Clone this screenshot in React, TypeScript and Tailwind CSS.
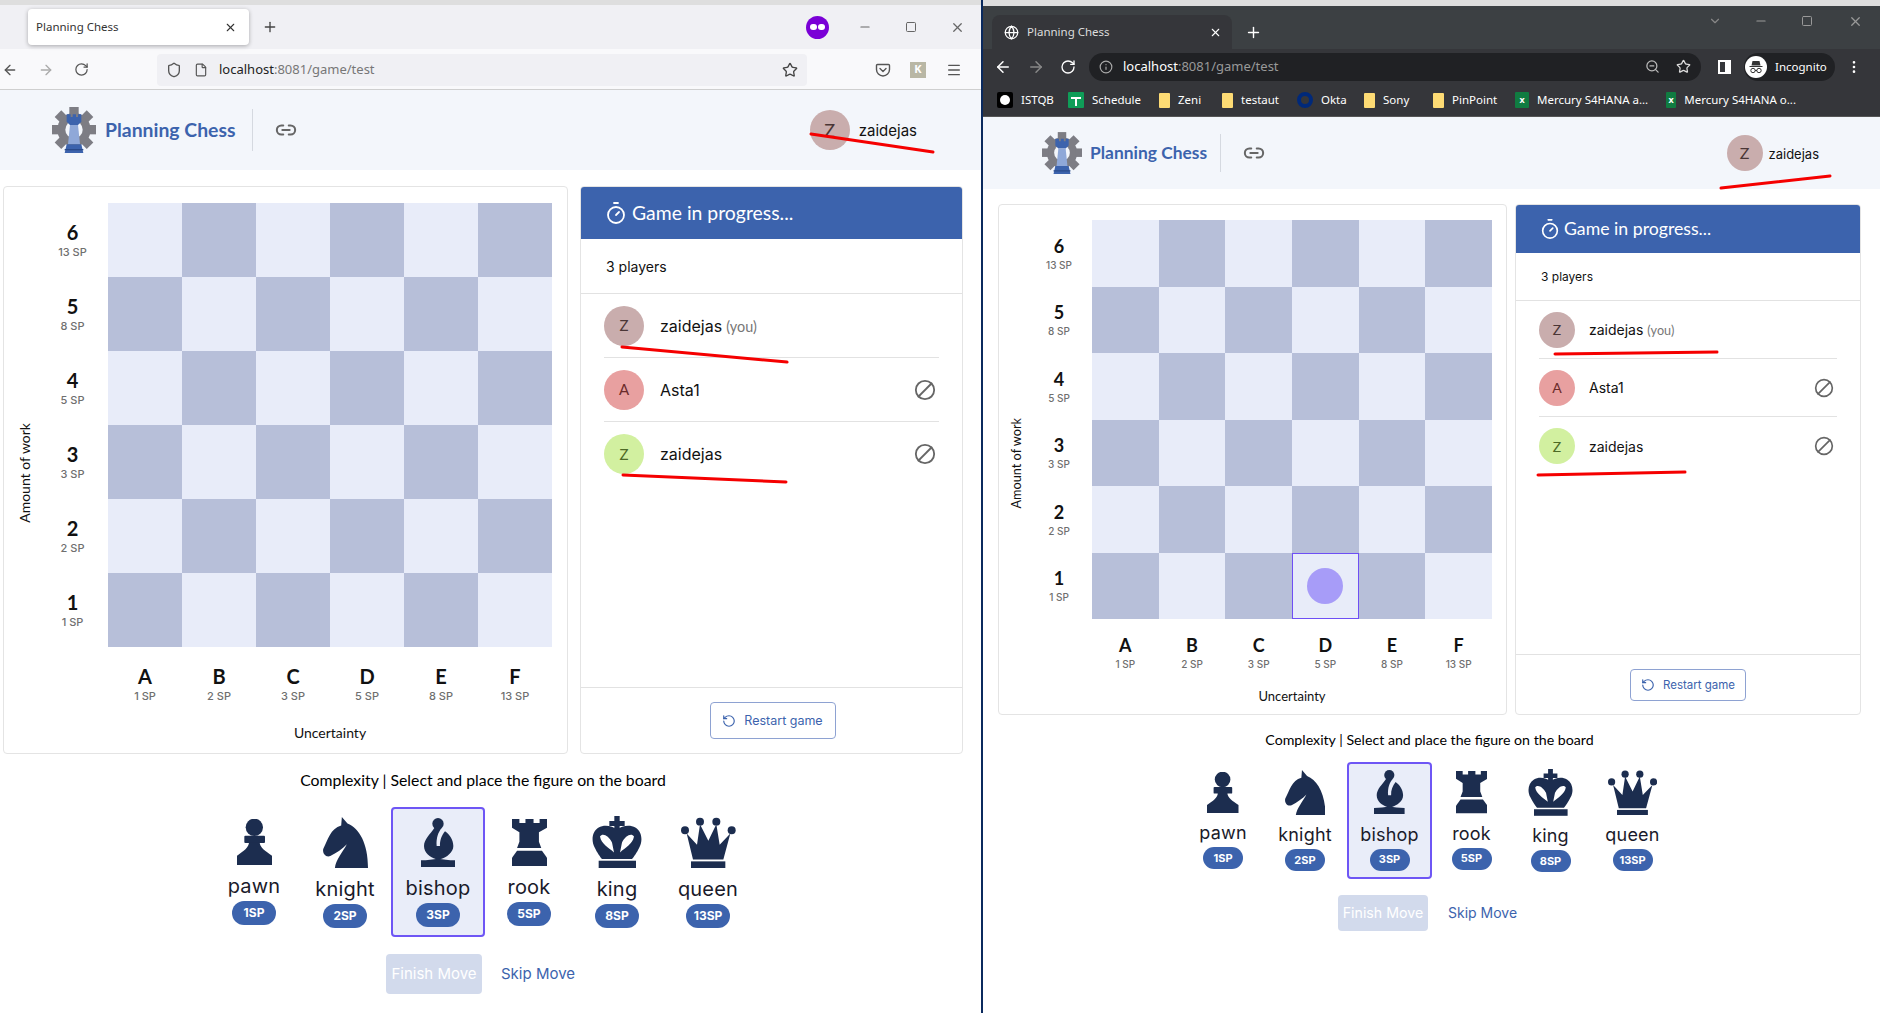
import { ArrowLeft, ArrowRight, Ban, File, Globe, Info, Link2, Menu, Minus, Plus, RotateCcw, RotateCw, Shield, Square, Star, Timer, X, ZoomOut, ChevronDown, EllipsisVertical } from 'lucide-react'

const navy = '#1c2d4f'

function Pawn({ s }: { s: number }) {
  return (
    <svg width={35 * s} height={46 * s} viewBox="0 0 105 138" preserveAspectRatio="none" fill={navy}>
      <circle cx="52" cy="25" r="26" />
      <rect x="22" y="50" width="62" height="22" rx="3" />
      <path d="M36 70C36 85 20 97 0 110V138H105V110C85 97 68 85 68 70Z" />
    </svg>
  )
}

function Knight({ s }: { s: number }) {
  return (
    <svg width={45 * s} height={51 * s} viewBox="0 0 136 154" preserveAspectRatio="none" fill={navy}>
      <path d="M57 0L74 20C110 35 136 80 136 154H36C38 130 60 105 72 82C60 96 40 108 22 118C8 124-3 108 1 96C15 70 22 35 55 26Z" />
    </svg>
  )
}

function Bishop({ s }: { s: number }) {
  return (
    <svg width={34 * s} height={49 * s} viewBox="0 0 102 147" preserveAspectRatio="none" fill={navy}>
      <circle cx="51" cy="17" r="17" />
      <path d="M40 30H62C52 42 45 60 47 84H57C56 68 62 52 72 40C86 50 97 66 97 84C97 104 76 118 60 123H44C28 118 9 105 9 84C9 64 28 48 40 30Z" />
      <path d="M0 127C20 127 35 124 51 122C67 124 82 127 102 127V147H0Z" />
    </svg>
  )
}

function Rook({ s }: { s: number }) {
  return (
    <svg width={35 * s} height={47 * s} viewBox="0 0 104 141" preserveAspectRatio="none" fill={navy}>
      <path d="M0 0H22V12H40V0H64V12H82V0H104V26L80 40V68L87 87H15L22 68V40L0 26Z" />
      <path d="M15 95H89L104 116V141H0V116Z" />
    </svg>
  )
}

function King({ s }: { s: number }) {
  return (
    <svg width={50 * s} height={52 * s} viewBox="0 0 150 157" preserveAspectRatio="none" fill={navy}>
      <path d="M67 0H83V15H98V30H83V44H67V30H52V15H67Z" />
      <path
        fillRule="evenodd"
        d="M75 42C60 28 35 26 20 35C0 47-3 75 8 95C15 110 25 124 30 130H120C125 124 135 110 142 95C153 75 150 47 130 35C115 26 90 28 75 42ZM24 62C32 50 50 60 60 80L66 110C50 95 28 85 24 62ZM126 62C118 50 100 60 90 80L84 110C100 95 122 85 126 62Z"
      />
      <rect x="20" y="135" width="112" height="22" />
    </svg>
  )
}

function Queen({ s }: { s: number }) {
  return (
    <svg width={55 * s} height={51 * s} viewBox="0 0 165 154" preserveAspectRatio="none" fill={navy}>
      <circle cx="12" cy="40" r="12" />
      <circle cx="57" cy="14" r="12" />
      <circle cx="106" cy="14" r="12" />
      <circle cx="152" cy="40" r="12" />
      <path d="M36 128L17 50L48 84L57 22L82 72L106 22L116 84L148 50L127 128Z" />
      <rect x="30" y="134" width="103" height="20" />
    </svg>
  )
}

function Logo({ small }: { small?: boolean }) {
  return (
    <svg className={small ? 'h-[42px] w-[40px]' : 'h-[46px] w-[44px]'} viewBox="0 0 132 138">
      <g fill="#7d7d84">
        <circle cx="66" cy="68" r="50" />
        {[0, 45, 90, 135, 180, 225, 270, 315].map((a) => (
          <rect key={a} x="52" y="0" width="28" height="24" transform={`rotate(${a} 66 68)`} />
        ))}
      </g>
      <circle cx="66" cy="68" r="26" fill="#f3f6fb" />
      <path d="M44 22H56V30H62V22H72V30H78V22H88V44L78 54H54L44 44Z" fill="#3c63ad" />
      <path d="M54 54H78L84 112H48Z" fill="#8fa8d8" />
      <path d="M44 112H88L94 138H38Z" fill="#3c63ad" />
      <rect x="38" y="126" width="56" height="4" fill="#2a4a8a" />
    </svg>
  )
}

const big = {
  header: 'h-[80px] pl-[52px] pr-[64px]',
  logoText: 'ml-[9px] text-[19.4px]',
  sep: 'ml-[17px] h-[42px] mr-[22px]',
  headAvatar: 'h-[40px] w-[40px] text-[18px]',
  headName: 'ml-[9px] pt-[2px] text-[15px]',
  main: 'w-[963px] pt-[16px] pl-[3px]',
  panels: 'gap-[12px]',
  boardPanel: 'h-[568px] w-[565px] pt-[16px]',
  axisY: 'w-[41px] pt-[96px] text-[14px]',
  rowLabels: 'w-[55px] mr-[8px]',
  board: 'h-[444px] w-[444px]',
  num: 'text-[20px] leading-[24px]',
  sp: 'text-[11px] leading-[16px]',
  cols: 'ml-[104px] w-[444px] mt-[17px]',
  axisX: 'ml-[104px] w-[444px] mt-[18px] text-[14px]',
  status: 'h-[568px] w-[383px]',
  statusHead: 'h-[52px] pl-[23px] text-[19.4px] gap-[4px]',
  timer: 24,
  players: 'h-[55px] pl-[25px] text-[14px]',
  rows: 'px-[23px]',
  row: 'h-[64px]',
  avatar: 'h-[40px] w-[40px] text-[15px]',
  name: 'ml-[16px] text-[16px]',
  ban: 22,
  statusFoot: 'h-[66px]',
  restart: 'ml-[2px] h-[37px] w-[126px] text-[12.5px] gap-[8px]',
  complexity: 'mt-[14px] h-[20px] text-[15.8px]',
  pieces: 'mt-[19px] pl-[206px]',
  pieceBox: 'h-[130px]',
  widths: ['w-[90px]', 'w-[92px]', 'w-[94px]', 'w-[88px]', 'w-[88px]', 'w-[94px]'],
  label: 'mt-[9px] h-[24px] text-[20px] leading-[24px] tracking-[0.2px]',
  badge: 'mt-[3px] h-[24px] w-[44px] text-[12px]',
  actions: 'mt-[17px] pl-[383px] gap-[19px]',
  finish: 'h-[40px] w-[96px] text-[15px]',
  skip: 'pt-[1px] text-[15px]',
  scale: 1,
}

const small = {
  header: 'h-[72px] pl-[59px] pr-[61px]',
  logoText: 'ml-[8px] text-[17.4px]',
  sep: 'ml-[13px] h-[38px] mr-[22px]',
  headAvatar: 'h-[36px] w-[36px] text-[16px]',
  headName: 'ml-[6px] pt-[3px] text-[13px]',
  main: 'w-[878px] pt-[15px] pl-[15px]',
  panels: 'gap-[8px]',
  boardPanel: 'h-[511px] w-[509px] pt-[15px]',
  axisY: 'w-[36px] pt-[88px] text-[12.7px]',
  rowLabels: 'w-[48px] mr-[9px]',
  board: 'h-[399px] w-[400px]',
  num: 'text-[18px] leading-[23px]',
  sp: 'text-[10px] leading-[14px]',
  cols: 'ml-[93px] w-[400px] mt-[15px]',
  axisX: 'ml-[93px] w-[400px] mt-[16px] text-[13px]',
  status: 'h-[511px] w-[346px]',
  statusHead: 'h-[48px] pl-[23px] text-[17.7px] gap-[3px]',
  timer: 22,
  players: 'h-[48px] pl-[25px] text-[12px]',
  rows: 'px-[23px]',
  row: 'h-[58px]',
  avatar: 'h-[36px] w-[36px] text-[14px]',
  name: 'ml-[14px] text-[14px]',
  ban: 20,
  statusFoot: 'h-[60px]',
  restart: 'h-[32px] w-[116px] text-[11.5px] gap-[8px]',
  complexity: 'mt-[14px] h-[20px] text-[14.2px]',
  pieces: 'mt-[13px] pl-[185px]',
  pieceBox: 'h-[117px]',
  widths: ['w-[80px]', 'w-[84px]', 'w-[85px]', 'w-[79px]', 'w-[79px]', 'w-[85px]'],
  label: 'mt-[9px] h-[22px] text-[18px] leading-[22px] tracking-[0.2px]',
  badge: 'mt-[3px] h-[22px] w-[40px] text-[11px]',
  actions: 'mt-[16px] pl-[340px] gap-[20px]',
  finish: 'h-[36px] w-[90px] text-[14.2px]',
  skip: 'pb-[1px] text-[14px]',
  scale: 0.9,
}

type Size = typeof big

const lato = '[font-family:Lato,sans-serif]'
const rubik = '[font-family:Inter,sans-serif]'

function AppHeader({ v, isSmall }: { v: Size; isSmall?: boolean }) {
  return (
    <div className={`flex items-center bg-[#f3f6fb] ${v.header}`}>
      <Logo small={isSmall} />
      <span className={`font-bold text-[#3c63ad] ${lato} ${v.logoText}`}>Planning Chess</span>
      <div className={`w-px bg-[#d5d9e0] ${v.sep}`} />
      <Link2 size={22} className="text-[#666]" strokeWidth={2.2} />
      <div className={`ml-auto flex items-center justify-center rounded-full bg-[#c9adad] text-[#4a3636] ${v.headAvatar} ${lato}`}>Z</div>
      <span className={`text-[#111] ${rubik} ${v.headName}`}>zaidejas</span>
    </div>
  )
}

function Board({ v, placed }: { v: Size; placed?: boolean }) {
  const rows = [
    ['6', '13 SP'],
    ['5', '8 SP'],
    ['4', '5 SP'],
    ['3', '3 SP'],
    ['2', '2 SP'],
    ['1', '1 SP'],
  ]
  const cols = [
    ['A', '1 SP'],
    ['B', '2 SP'],
    ['C', '3 SP'],
    ['D', '5 SP'],
    ['E', '8 SP'],
    ['F', '13 SP'],
  ]
  return (
    <div className={`shrink-0 rounded border border-[#e4e4e4] bg-white ${v.boardPanel}`}>
      <div className="flex">
        <div className={`flex items-center justify-center ${v.axisY}`}>
          <span className={`rotate-180 whitespace-nowrap text-[#111] [writing-mode:vertical-rl] ${lato}`}>Amount of work</span>
        </div>
        <div className={`grid grid-rows-6 ${v.rowLabels}`}>
          {rows.map(([n, sp]) => (
            <div key={n} className="flex flex-col items-center justify-center">
              <span className={`font-bold text-[#111] ${lato} ${v.num}`}>{n}</span>
              <span className={`font-medium text-[#6f6f6f] ${rubik} ${v.sp}`}>{sp}</span>
            </div>
          ))}
        </div>
        <div className={`grid grid-cols-6 grid-rows-6 ${v.board}`}>
          {Array.from({ length: 36 }).map((_, i) => {
            const r = Math.floor(i / 6)
            const c = i % 6
            const on = placed && r === 5 && c === 3
            return (
              <div
                key={i}
                className={`flex items-center justify-center ${(r + c) % 2 === 0 ? 'bg-[#e8ecf9]' : 'bg-[#b7bfd9]'} ${on ? 'border border-[#6e4ff5]' : ''}`}
              >
                {on && <div className="h-[36px] w-[36px] rounded-full bg-[#a79cf8]" />}
              </div>
            )
          })}
        </div>
      </div>
      <div className={`grid grid-cols-6 ${v.cols}`}>
        {cols.map(([n, sp]) => (
          <div key={n} className="flex flex-col items-center">
            <span className={`font-bold text-[#111] ${lato} ${v.num}`}>{n}</span>
            <span className={`font-medium text-[#6f6f6f] ${rubik} ${v.sp}`}>{sp}</span>
          </div>
        ))}
      </div>
      <div className={`text-center text-[#111] ${lato} ${v.axisX}`}>Uncertainty</div>
    </div>
  )
}

function Status({ v }: { v: Size }) {
  const players = [
    { name: 'zaidejas', you: true, bg: 'bg-[#c9adad]', fg: 'text-[#4a3636]', letter: 'Z' },
    { name: 'Asta1', bg: 'bg-[#e8a0a0]', fg: 'text-[#6b2b2b]', letter: 'A' },
    { name: 'zaidejas', bg: 'bg-[#d2f0a0]', fg: 'text-[#4d6a26]', letter: 'Z' },
  ]
  return (
    <div className={`flex shrink-0 flex-col overflow-hidden rounded border border-[#e4e4e4] bg-white ${v.status}`}>
      <div className={`flex items-center bg-[#3c63ad] text-white ${lato} ${v.statusHead}`}>
        <Timer size={v.timer} strokeWidth={1.8} />
        Game in progress...
      </div>
      <div className={`flex items-center border-b border-[#e2e2e2] text-[#111] ${rubik} ${v.players}`}>3 players</div>
      <div className={v.rows}>
        {players.map((p, i) => (
          <div key={i} className={`flex items-center ${v.row} ${i < 2 ? 'border-b border-[#e2e2e2]' : ''}`}>
            <div className={`flex items-center justify-center rounded-full ${p.bg} ${p.fg} ${v.avatar} ${lato}`}>{p.letter}</div>
            <span className={`text-[#111] ${rubik} ${v.name}`}>
              {p.name}
              {p.you && <span className={`ml-[4px] text-[0.9em] text-[#777] ${lato}`}>(you)</span>}
            </span>
            {!p.you && <Ban size={v.ban} strokeWidth={2} className="ml-auto mr-[3px] -scale-x-100 text-[#666]" />}
          </div>
        ))}
      </div>
      <div className={`mt-auto flex items-center justify-center border-t border-[#e2e2e2] ${v.statusFoot}`}>
        <button className={`flex items-center justify-center rounded border border-[#8ea2d2] text-[#3c63ad] ${rubik} ${v.restart}`}>
          <RotateCcw size={14} />
          <span className="pt-[2px]">Restart game</span>
        </button>
      </div>
    </div>
  )
}

function Figures({ v }: { v: Size }) {
  const figures = [
    { name: 'pawn', sp: '1SP', Icon: Pawn },
    { name: 'knight', sp: '2SP', Icon: Knight },
    { name: 'bishop', sp: '3SP', Icon: Bishop, active: true },
    { name: 'rook', sp: '5SP', Icon: Rook },
    { name: 'king', sp: '8SP', Icon: King },
    { name: 'queen', sp: '13SP', Icon: Queen },
  ]
  return (
    <div className={`flex ${v.pieces}`}>
      {figures.map(({ name, sp, Icon, active }, i) => (
        <div
          key={name}
          className={`flex flex-col items-center justify-center rounded ${v.pieceBox} ${v.widths[i]} ${active ? 'border-2 border-[#6e56f5] bg-[#e9edf9]' : ''}`}
        >
          <Icon s={v.scale} />
          <span className={`text-[#1a1a2a] ${rubik} ${v.label}`}>{name}</span>
          <span className={`flex items-center justify-center rounded-full bg-[#3c63ad] font-bold text-white ${rubik} ${v.badge}`}>{sp}</span>
        </div>
      ))}
    </div>
  )
}

function Game({ v, placed }: { v: Size; placed?: boolean }) {
  return (
    <div className={v.main}>
      <div className={`flex ${v.panels}`}>
        <Board v={v} placed={placed} />
        <Status v={v} />
      </div>
      <div className={`text-center text-black ${lato} ${v.complexity}`}>Complexity | Select and place the figure on the board</div>
      <Figures v={v} />
      <div className={`flex items-center ${v.actions}`}>
        <button className={`rounded bg-[#d2daec] text-white ${rubik} ${v.finish}`}>Finish Move</button>
        <span className={`text-[#3c63ad] ${rubik} ${v.skip}`}>Skip Move</span>
      </div>
    </div>
  )
}

function Pocket() {
  return (
    <svg width="16" height="16" viewBox="0 0 16 16" fill="none" stroke="#555" strokeWidth="1.4" strokeLinecap="round" strokeLinejoin="round" className="ml-[68px]">
      <path d="M2.5 2.5H13.5A1 1 0 0 1 14.5 3.5V7.5A6.5 6.5 0 0 1 1.5 7.5V3.5A1 1 0 0 1 2.5 2.5Z" />
      <path d="M5 6.5L8 9.5L11 6.5" />
    </svg>
  )
}

function FirefoxBar() {
  return (
    <div className="[font-family:'Noto_Sans',sans-serif]">
      <div className="h-[5px] bg-[#dedede]" />
      <div className="flex h-[44px] items-center bg-[#f0f0f4]">
        <div className="ml-[28px] flex h-[36px] w-[221px] items-center rounded bg-white pl-[8px] pr-[12px] text-[11.5px] text-[#333] shadow-[0_1px_4px_rgba(0,0,0,0.3)]">
          Planning Chess
          <X size={13} className="ml-auto" />
        </div>
        <Plus size={16} className="ml-[13px] text-[#444]" />
        <div className="ml-[528px] flex h-[23px] w-[23px] items-center justify-center gap-[1px] rounded-full bg-[#7a00d6]">
          <span className="h-[6px] w-[7px] rounded-full bg-white" />
          <span className="h-[6px] w-[7px] rounded-full bg-white" />
        </div>
        <Minus size={14} className="ml-[29px] text-[#666]" />
        <Square size={12} className="ml-[33px] text-[#666]" />
        <X size={15} className="ml-[33px] text-[#666]" />
      </div>
      <div className="flex h-[41px] items-center border-b border-[#cfcfcf] bg-[#f9f9fb] pt-[1px]">
        <ArrowLeft size={16} className="ml-[2px] text-[#555]" />
        <ArrowRight size={16} className="ml-[20px] text-[#aaa]" />
        <RotateCw size={15} className="ml-[20px] text-[#555]" />
        <div className="ml-[68px] flex h-[32px] w-[650px] items-center rounded bg-[#f0f0f4] pl-[9px] pr-[9px] text-[13px]">
          <Shield size={16} className="text-[#555]" />
          <File size={14} className="ml-[12px] text-[#555]" />
          <span className="ml-[11px] text-[#222]">localhost</span>
          <span className="text-[#777]">:8081/game/test</span>
          <Star size={16} className="ml-auto text-[#444]" />
        </div>
        <Pocket />
        <div className="ml-[19px] flex h-[16px] w-[16px] items-center justify-center bg-[#b9b7a5] text-[11px] font-bold text-white">K</div>
        <Menu size={16} className="ml-[20px] text-[#555]" />
      </div>
    </div>
  )
}

function Folder() {
  return <div className="h-[15px] w-[11px] rounded-[1px] bg-[#fddb74]" />
}

function Excel() {
  return <div className="flex h-[16px] w-[14px] items-center justify-center rounded-[1px] bg-[#107c41] text-[9px] font-bold text-white">x</div>
}

function ScheduleIcon() {
  return (
    <svg width="16" height="16" viewBox="0 0 16 16">
      <rect width="16" height="16" rx="1" fill="#0f9d58" />
      <path d="M3 5H13V7H9V14H7V7H3Z" fill="#fff" />
    </svg>
  )
}

function IncognitoIcon() {
  return (
    <svg width="22" height="22" viewBox="0 0 22 22">
      <circle cx="11" cy="11" r="11" fill="#fff" />
      <path d="M7.5 5H14.5L15.5 9.5H6.5Z M4.5 10H17.5V11H4.5Z" fill="#333" />
      <circle cx="8" cy="14.5" r="2.2" fill="none" stroke="#333" />
      <circle cx="14" cy="14.5" r="2.2" fill="none" stroke="#333" />
      <path d="M10 14.5H12" stroke="#333" />
    </svg>
  )
}

function ChromeBar() {
  const marks = [
    { text: 'ISTQB', icon: <div className="h-[16px] w-[16px] rounded-[2px] bg-black p-[3px]"><div className="h-full w-full rounded-full bg-white" /></div>, w: 'w-[71px]' },
    { text: 'Schedule', icon: <ScheduleIcon />, w: 'w-[91px]' },
    { text: 'Zeni', icon: <Folder />, w: 'w-[63px]' },
    { text: 'testaut', icon: <Folder />, w: 'w-[75px]' },
    { text: 'Okta', icon: <div className="h-[16px] w-[16px] rounded-full border-[4px] border-[#00297a]" />, w: 'w-[67px]' },
    { text: 'Sony', icon: <Folder />, w: 'w-[69px]' },
    { text: 'PinPoint', icon: <Folder />, w: 'w-[82px]' },
    { text: 'Mercury S4HANA a...', icon: <Excel />, w: 'w-[151px]' },
    { text: 'Mercury S4HANA o...', icon: <Excel />, w: 'w-[130px]' },
  ]
  return (
    <div className="text-white [font-family:'Noto_Sans',sans-serif]">
      <div className="h-[6px] bg-[#dedede]" />
      <div className="flex h-[43px] items-end bg-[#3c4043] pl-[9px]">
        <div className="flex h-[34px] w-[240px] items-center rounded-t-lg bg-[#35363a] pl-[12px] pr-[10px] text-[11.5px]">
          <Globe size={15} />
          <span className="ml-[8px] text-[#ddd]">Planning Chess</span>
          <X size={13} className="ml-auto" />
        </div>
        <Plus size={17} className="mb-[8px] ml-[13px]" />
        <ChevronDown size={14} className="mb-[21px] ml-[446px] text-[#888]" />
        <Minus size={14} className="mb-[21px] ml-[32px] text-[#999]" />
        <Square size={12} className="mb-[22px] ml-[33px] text-[#999]" />
        <X size={15} className="mb-[20px] ml-[35px] text-[#999]" />
      </div>
      <div className="flex h-[35px] items-center bg-[#35363a]">
        <ArrowLeft size={18} className="ml-[11px]" />
        <ArrowRight size={18} className="ml-[15px] text-[#888]" />
        <RotateCw size={16} className="ml-[15px]" />
        <div className="ml-[13px] flex h-[28px] w-[612px] items-center rounded-full bg-[#202124] pl-[10px] pr-[10px] text-[13px]">
          <Info size={14} className="text-[#aaa]" />
          <span className="ml-[10px]">localhost</span>
          <span className="text-[#999]">:8081/game/test</span>
          <ZoomOut size={15} className="ml-auto text-[#bbb]" />
          <Star size={15} className="ml-[16px] text-[#ddd]" />
        </div>
        <div className="ml-[17px] h-[14px] w-[13px] border-2 border-r-[6px] border-white" />
        <div className="ml-[13px] flex h-[28px] w-[91px] items-center rounded-full bg-[#202124] pl-[1px] text-[11.5px]">
          <IncognitoIcon />
          <span className="ml-[8px]">Incognito</span>
        </div>
        <EllipsisVertical size={16} className="ml-[11px]" />
      </div>
      <div className="flex h-[33px] items-center border-b border-[#555] bg-[#35363a] pl-[14px] text-[11.5px]">
        {marks.map((m) => (
          <div key={m.text} className={`flex items-center gap-[8px] ${m.w}`}>
            {m.icon}
            <span className="whitespace-nowrap">{m.text}</span>
          </div>
        ))}
      </div>
    </div>
  )
}

function Scribbles() {
  const lines = [
    [811, 134, 933, 152],
    [622, 347, 787, 362],
    [623, 475, 786, 482],
    [1721, 188, 1830, 176],
    [1555, 354, 1717, 352],
    [1538, 475, 1685, 472],
  ]
  return (
    <svg className="pointer-events-none absolute left-0 top-0 h-[1013px] w-[1880px]" viewBox="0 0 1880 1013">
      {lines.map(([x1, y1, x2, y2]) => (
        <line key={x1} x1={x1} y1={y1} x2={x2} y2={y2} stroke="#f50000" strokeWidth="3" strokeLinecap="round" />
      ))}
    </svg>
  )
}

export default function App() {
  return (
    <div className="relative flex h-[1013px] w-[1880px] overflow-hidden bg-white">
      <div className="h-full w-[981px] bg-white">
        <FirefoxBar />
        <AppHeader v={big} />
        <Game v={big} />
      </div>
      <div className="h-full flex-1 border-l-2 border-[#0b2a5e] bg-white">
        <ChromeBar />
        <AppHeader v={small} isSmall />
        <Game v={small} placed />
      </div>
      <Scribbles />
    </div>
  )
}
